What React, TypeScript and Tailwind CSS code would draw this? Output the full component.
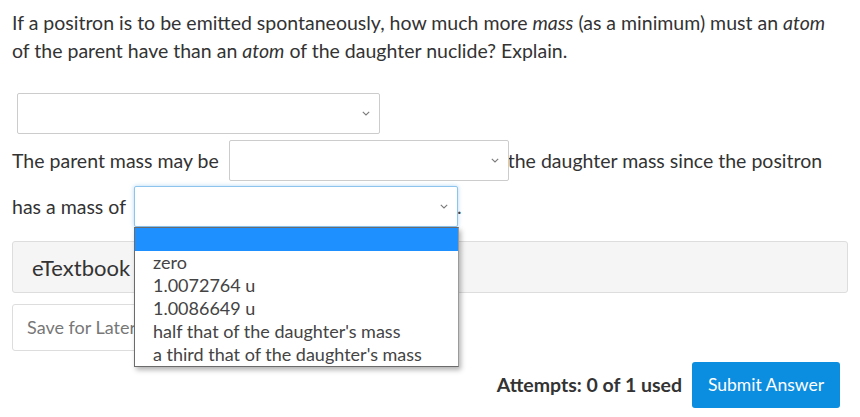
import type { ReactNode } from 'react'

const options = ['', 'zero', '1.0072764 u', '1.0086649 u', "half that of the daughter's mass", "a third that of the daughter's mass"]

function Chevron() {
  return (
    <svg width="8" height="5" viewBox="0 0 8 5" className="shrink-0">
      <path d="M0.8 0.8 L4 4 L7.2 0.8" fill="none" stroke="#7a7a7a" strokeWidth="1.1" />
    </svg>
  )
}

function FakeSelect({ className, focused, children }: { className: string; focused?: boolean; children?: ReactNode }) {
  return (
    <div
      className={`relative flex h-[41px] shrink-0 items-center justify-end rounded-[2px] border bg-white pr-[9px] ${
        focused ? 'border-[#8cc4ee] shadow-[0_0_4px_rgba(102,175,233,0.5)]' : 'border-[#cccccc]'
      } ${className}`}
    >
      <Chevron />
      {children}
    </div>
  )
}

export default function App() {
  return (
    <div className="h-[417px] w-[860px] overflow-hidden bg-white px-3 pt-[9px] text-[#333333]" style={{ fontFamily: 'Lato, "Liberation Sans", sans-serif' }}>
      <p className="pr-[16px] text-[19.5px] leading-[28px]">
        If a positron is to be emitted spontaneously, how much more <em>mass</em> (as a minimum) must an <em>atom</em> of the parent have than an <em>atom</em> of the daughter nuclide? Explain.
      </p>

      <div className="mt-[28px] flex items-center pl-[5px]">
        <FakeSelect className="w-[363px]" />
        <span className="-ml-[4px] text-[19.5px]">.</span>
      </div>

      <div className="mt-[6px] flex items-center text-[19.5px]">
        <span>The parent mass may be</span>
        <FakeSelect className="ml-[10px] w-[280px]" />
        <span className="-ml-[1px]">the daughter mass since the positron</span>
      </div>

      <div className="mt-[5px] flex items-center text-[19.5px]">
        <span>has a mass of</span>
        <FakeSelect className="z-10 ml-[8px] w-[324px]" focused>
          <ul className="absolute left-[-1px] top-[40px] w-[325px] border border-[#6b6b6b] border-r-[#9a9a9a] bg-white text-[18px] leading-[23px] text-[#444444] shadow-[2px_3px_5px_rgba(0,0,0,0.3)]">
            {options.map((option, index) => (
              <li key={index} className={`h-[23px] pl-[18px] ${index === 0 ? 'bg-[#1e90ff]' : ''}`}>
                {option}
              </li>
            ))}
          </ul>
        </FakeSelect>
        <span className="-ml-[1px]">.</span>
      </div>

      <div className="mt-[14px] flex h-[52px] items-center rounded-[3px] border border-[#dddddd] bg-[#f5f5f5] pl-[19px] text-[22px]">
        eTextbook
      </div>

      <div className="mt-[11px] flex">
        <button className="h-[47px] rounded-[3px] border border-[#dddddd] bg-white px-[14px] text-[18px] text-[#777777]">Save for Later</button>
      </div>

      <div className="mt-[11px] flex items-center justify-end gap-[10px] pr-[8px]">
        <span className="text-[19.5px] font-bold">Attempts: 0 of 1 used</span>
        <button className="h-[46px] w-[148px] rounded-[3px] bg-[#0b8de0] text-[17.5px] text-white">Submit Answer</button>
      </div>
    </div>
  )
}
